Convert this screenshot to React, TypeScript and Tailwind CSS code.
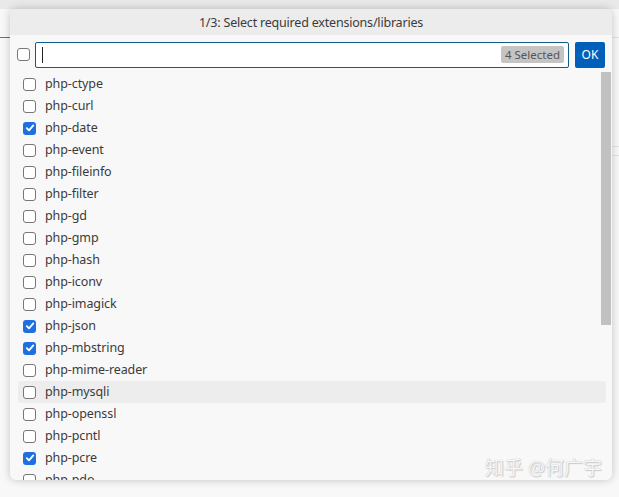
import React from 'react';

const items: { name: string; checked?: boolean; hover?: boolean }[] = [
  { name: 'php-ctype' },
  { name: 'php-curl' },
  { name: 'php-date', checked: true },
  { name: 'php-event' },
  { name: 'php-fileinfo' },
  { name: 'php-filter' },
  { name: 'php-gd' },
  { name: 'php-gmp' },
  { name: 'php-hash' },
  { name: 'php-iconv' },
  { name: 'php-imagick' },
  { name: 'php-json', checked: true },
  { name: 'php-mbstring', checked: true },
  { name: 'php-mime-reader' },
  { name: 'php-mysqli', hover: true },
  { name: 'php-openssl' },
  { name: 'php-pcntl' },
  { name: 'php-pcre', checked: true },
  { name: 'php-pdo' },
];

const Box: React.FC<{ checked?: boolean }> = ({ checked }) =>
  checked ? (
    <span className="flex h-[13px] w-[13px] items-center justify-center rounded-[3px] bg-[#1f6fe0]">
      <svg width="10" height="10" viewBox="0 0 10 10">
        <path d="M1.8 5.2 L4 7.4 L8.3 2.4" fill="none" stroke="#fff" strokeWidth="1.8" strokeLinecap="round" strokeLinejoin="round" />
      </svg>
    </span>
  ) : (
    <span className="block h-[13px] w-[13px] rounded-[3px] border border-[#767676] bg-white" />
  );

export default function App() {
  return (
    <div className="relative h-[497px] w-[619px] overflow-hidden bg-[#f8f8f8] font-['Noto_Sans','Noto_Sans_CJK_SC',sans-serif]">
      {/* page behind */}
      <div className="h-[9px] bg-[#e9e9e9]" />
      <div className="mt-[28px] h-px w-[12px] bg-[#3d7fb0]" />
      <div className="absolute right-0 top-[37px] h-px w-[10px] bg-[#e2e2e2]" />
      <div className="absolute right-0 top-[146px] h-px w-[10px] bg-[#e2e2e2]" />
      <div className="absolute right-0 top-[155px] h-px w-[10px] bg-[#e2e2e2]" />

      {/* quick pick */}
      <div className="absolute left-[10px] top-[9px] flex h-[471px] w-[602px] flex-col overflow-hidden rounded-[6px] bg-[#f8f8f8] shadow-[0_0_8px_rgba(0,0,0,0.22)]">
        <div className="flex h-[26px] shrink-0 items-center justify-center bg-[#ececec] pt-[2px] text-[12.5px] tracking-[-0.2px] text-[#3b3b3b]">
          1/3: Select required extensions/libraries
        </div>
        <div className="flex h-[37px] shrink-0 items-center pl-[7px] pr-[7px] pt-[2px]">
          <Box />
          <div className="ml-[5px] flex h-[26px] flex-1 items-center rounded-[2px] border border-[#0f5e8a] bg-white pl-[6px] pr-[4px]">
            <span className="h-[16px] w-px bg-[#222]" />
            <span className="ml-auto rounded-[2px] bg-[#c4c4c4] px-[4px] text-[11.5px] leading-[17px] text-[#555]">4 Selected</span>
          </div>
          <button className="ml-[6px] h-[26px] w-[30px] rounded-[2px] bg-[#005fb8] text-[12px] text-white">OK</button>
        </div>
        <div className="relative flex flex-1 flex-col overflow-hidden pl-[8px] pr-[6px] pt-px">
          {items.map((it) => (
            <div
              key={it.name}
              className={`flex h-[22px] shrink-0 items-center rounded-[3px] pl-[5px] text-[12.5px] tracking-[-0.1px] text-[#3b3b3b] ${it.hover ? 'bg-[#ededed]' : ''}`}
            >
              <Box checked={it.checked} />
              <span className="ml-[9px]">{it.name}</span>
            </div>
          ))}
          <div className="absolute right-[1px] top-0 h-[253px] w-[10px] bg-[#c1c1c1]" />
        </div>
      </div>

      <div className="absolute left-[485px] top-[454px] text-[19px] text-[#f6f6f6] [text-shadow:0_0_1px_#b8b8b8,1px_1px_1px_#cccccc]">
        知乎 @何广宇
      </div>
    </div>
  );
}
